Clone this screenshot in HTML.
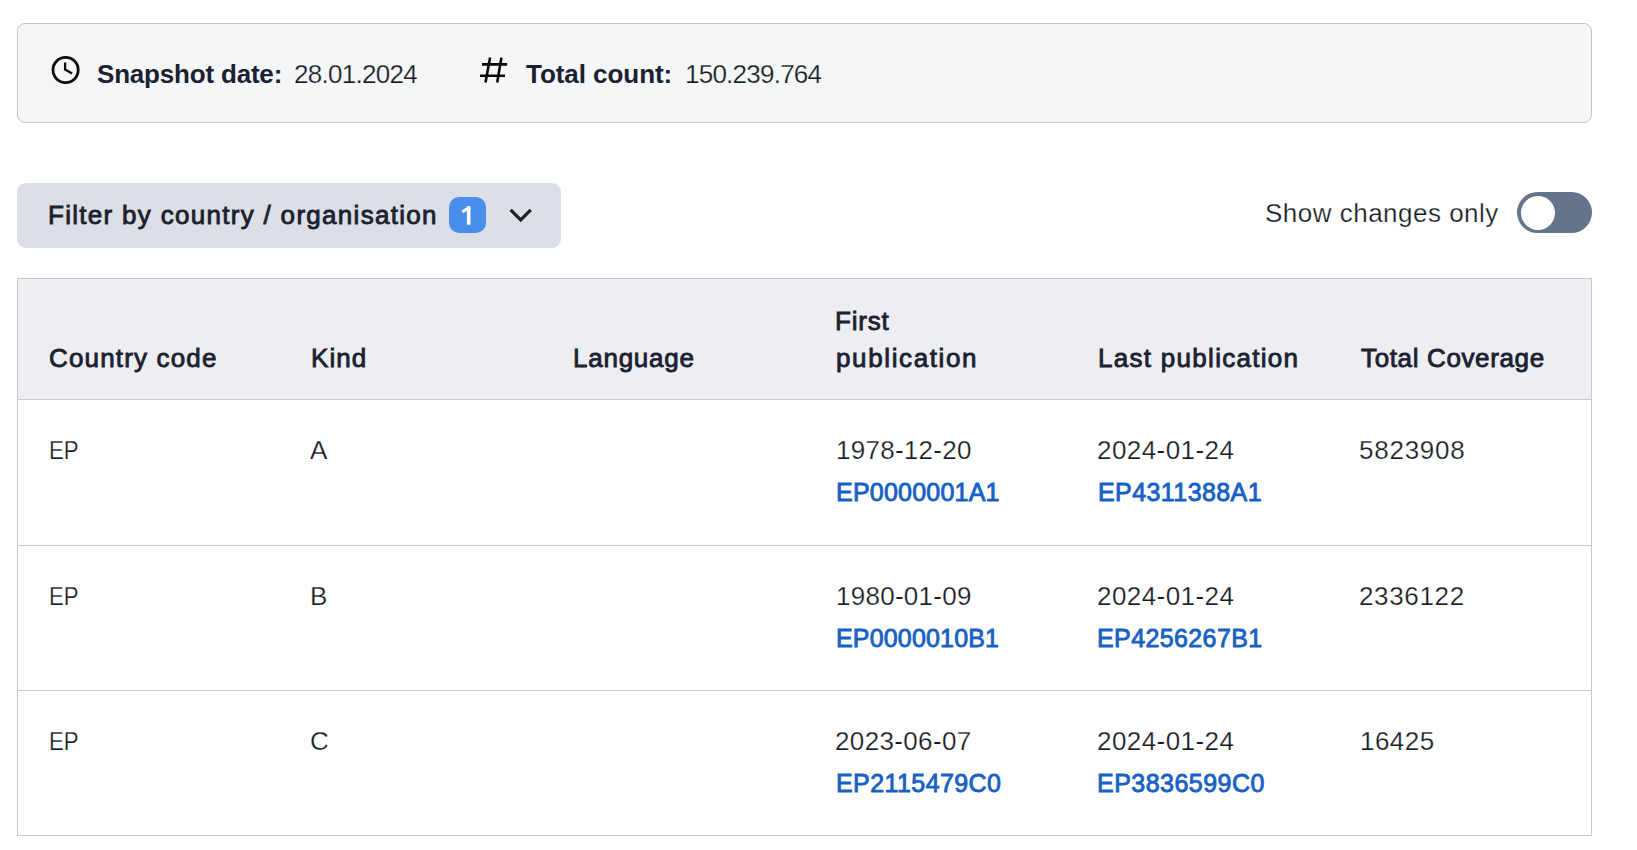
<!DOCTYPE html>
<html><head><meta charset="utf-8"><style>
html,body{margin:0;padding:0;background:#fff;}
body{width:1637px;height:850px;position:relative;overflow:hidden;font-family:"Liberation Sans",sans-serif;}
.t{position:absolute;white-space:nowrap;}
.ic{position:absolute;}
.panel{position:absolute;left:17px;top:23px;width:1573px;height:98px;border:1px solid #c4c5c7;border-radius:8px;background:#f5f6f8;}
.btn{position:absolute;left:17px;top:183px;width:544px;height:64.7px;border-radius:9px;background:#dcdfe5;}
.badge{position:absolute;left:449px;top:197px;width:37px;height:35.6px;border-radius:10px;background:#4a8eec;}
.tog{position:absolute;left:1517px;top:192px;width:75px;height:41px;border-radius:21px;background:#64748b;}
.knob{position:absolute;left:3.5px;top:3.5px;width:34.5px;height:34.5px;border-radius:50%;background:#fff;}
.table{position:absolute;left:17px;top:278px;width:1573px;height:556px;border:1px solid #c8c8c8;background:#fff;}
.thead{position:absolute;left:18px;top:279px;width:1573px;height:120px;background:#edeef2;}
.hl{position:absolute;left:18px;width:1573px;height:1px;background:#c8c8c8;}
</style></head>
<body>
<div class="panel"></div>
<svg class="ic" style="left:30px;top:40px" width="60" height="60" viewBox="0 0 60 60"><circle cx="35.6" cy="30" r="12.6" fill="none" stroke="#0a0a0a" stroke-width="2.8"/><path d="M35.1 22.6 V29.6 L42.1 33.6" fill="none" stroke="#0a0a0a" stroke-width="2.3"/></svg>
<svg class="ic" style="left:470px;top:45px" width="60" height="55" viewBox="0 0 60 55"><path d="M20.1 12.6 L15.5 37.5 M31.4 12.6 L27.2 37.5 M12 19.4 H37.2 M10 30.7 H35" fill="none" stroke="#0a0a0a" stroke-width="2.6"/></svg>
<div class="btn"></div>
<div class="badge"></div>
<svg class="ic" style="left:445px;top:193px" width="46" height="44" viewBox="0 0 46 44"><path d="M23.7 13.2 V31.8" stroke="#fff" stroke-width="3.6" fill="none"/><path d="M24.4 14.2 L17.3 18.9" stroke="#fff" stroke-width="3" fill="none"/></svg>
<svg class="ic" style="left:505px;top:203px" width="32" height="26" viewBox="0 0 32 26"><path d="M5.6 6.8 L15.7 16.9 L25.8 6.8" fill="none" stroke="#1d222c" stroke-width="3.3"/></svg>
<div class="tog"><div class="knob"></div></div>
<div class="table"></div>
<div class="thead"></div>
<div class="hl" style="top:399px"></div>
<div class="hl" style="top:545px"></div>
<div class="hl" style="top:690px"></div>
<div id="snap" class="t" style="left:97.00px;top:60.99px;font-size:26px;line-height:26px;font-weight:700;color:#1b2130;letter-spacing:-0.192px;transform:scaleX(1.0000);transform-origin:0 0">Snapshot date:</div>
<div id="date" class="t" style="left:294.00px;top:60.99px;font-size:26px;line-height:26px;font-weight:400;-webkit-text-stroke:0.25px #f5f6f8;color:#161a22;letter-spacing:-0.722px;transform:scaleX(1.0000);transform-origin:0 0">28.01.2024</div>
<div id="total" class="t" style="left:526.00px;top:60.99px;font-size:26px;line-height:26px;font-weight:700;color:#1b2130;letter-spacing:-0.055px;transform:scaleX(1.0000);transform-origin:0 0">Total count:</div>
<div id="count" class="t" style="left:685.00px;top:60.99px;font-size:26px;line-height:26px;font-weight:400;-webkit-text-stroke:0.25px #f5f6f8;color:#161a22;letter-spacing:-0.760px;transform:scaleX(1.0000);transform-origin:0 0">150.239.764</div>
<div id="filter" class="t" style="left:48.00px;top:202.29px;font-size:26px;line-height:26px;font-weight:400;-webkit-text-stroke:0.85px #1b2130;color:#1b2130;letter-spacing:1.300px;transform:scaleX(1.0000);transform-origin:0 0">Filter by country / organisation</div>
<div id="show" class="t" style="left:1265.00px;top:199.99px;font-size:26px;line-height:26px;font-weight:400;-webkit-text-stroke:0.25px #ffffff;color:#161a22;letter-spacing:0.488px;transform:scaleX(1.0000);transform-origin:0 0">Show changes only</div>
<div id="country" class="t" style="left:49.00px;top:344.99px;font-size:26px;line-height:26px;font-weight:400;-webkit-text-stroke:0.85px #1b2130;color:#1b2130;letter-spacing:1.164px;transform:scaleX(1.0000);transform-origin:0 0">Country code</div>
<div id="kind" class="t" style="left:311.00px;top:344.99px;font-size:26px;line-height:26px;font-weight:400;-webkit-text-stroke:0.85px #1b2130;color:#1b2130;letter-spacing:1.067px;transform:scaleX(1.0000);transform-origin:0 0">Kind</div>
<div id="lang" class="t" style="left:573.00px;top:344.99px;font-size:26px;line-height:26px;font-weight:400;-webkit-text-stroke:0.85px #1b2130;color:#1b2130;letter-spacing:0.757px;transform:scaleX(1.0000);transform-origin:0 0">Language</div>
<div id="first" class="t" style="left:835.00px;top:307.99px;font-size:26px;line-height:26px;font-weight:400;-webkit-text-stroke:0.85px #1b2130;color:#1b2130;letter-spacing:0.800px;transform:scaleX(1.0000);transform-origin:0 0">First</div>
<div id="publ" class="t" style="left:836.00px;top:344.99px;font-size:26px;line-height:26px;font-weight:400;-webkit-text-stroke:0.85px #1b2130;color:#1b2130;letter-spacing:1.620px;transform:scaleX(1.0000);transform-origin:0 0">publication</div>
<div id="last" class="t" style="left:1098.00px;top:344.99px;font-size:26px;line-height:26px;font-weight:400;-webkit-text-stroke:0.85px #1b2130;color:#1b2130;letter-spacing:1.293px;transform:scaleX(1.0000);transform-origin:0 0">Last publication</div>
<div id="tcov" class="t" style="left:1361.00px;top:344.99px;font-size:26px;line-height:26px;font-weight:400;-webkit-text-stroke:0.85px #1b2130;color:#1b2130;letter-spacing:0.638px;transform:scaleX(1.0000);transform-origin:0 0">Total Coverage</div>
<div id="r0c0" class="t" style="left:49.29px;top:436.99px;font-size:26px;line-height:26px;font-weight:400;-webkit-text-stroke:0.25px #ffffff;color:#161a22;letter-spacing:0.000px;transform:scaleX(0.8531);transform-origin:0 0">EP</div>
<div id="r0c1" class="t" style="left:310.00px;top:436.99px;font-size:26px;line-height:26px;font-weight:400;-webkit-text-stroke:0.25px #ffffff;color:#161a22;letter-spacing:0.000px;transform:scaleX(1.0000);transform-origin:0 0">A</div>
<div id="r0c2" class="t" style="left:836.00px;top:436.99px;font-size:26px;line-height:26px;font-weight:400;-webkit-text-stroke:0.25px #ffffff;color:#161a22;letter-spacing:0.267px;transform:scaleX(1.0000);transform-origin:0 0">1978-12-20</div>
<div id="r0c3" class="t" style="left:836.00px;top:480.34px;font-size:25px;line-height:25px;font-weight:400;-webkit-text-stroke:0.85px #1761c4;color:#1761c4;letter-spacing:0.220px;transform:scaleX(1.0000);transform-origin:0 0">EP0000001A1</div>
<div id="r0c4" class="t" style="left:1097.00px;top:436.99px;font-size:26px;line-height:26px;font-weight:400;-webkit-text-stroke:0.25px #ffffff;color:#161a22;letter-spacing:0.433px;transform:scaleX(1.0000);transform-origin:0 0">2024-01-24</div>
<div id="r0c5" class="t" style="left:1098.00px;top:480.34px;font-size:25px;line-height:25px;font-weight:400;-webkit-text-stroke:0.85px #1761c4;color:#1761c4;letter-spacing:0.420px;transform:scaleX(1.0000);transform-origin:0 0">EP4311388A1</div>
<div id="r0c6" class="t" style="left:1359.00px;top:436.99px;font-size:26px;line-height:26px;font-weight:400;-webkit-text-stroke:0.25px #ffffff;color:#161a22;letter-spacing:0.750px;transform:scaleX(1.0000);transform-origin:0 0">5823908</div>
<div id="r1c0" class="t" style="left:49.29px;top:582.99px;font-size:26px;line-height:26px;font-weight:400;-webkit-text-stroke:0.25px #ffffff;color:#161a22;letter-spacing:0.000px;transform:scaleX(0.8531);transform-origin:0 0">EP</div>
<div id="r1c1" class="t" style="left:310.00px;top:582.99px;font-size:26px;line-height:26px;font-weight:400;-webkit-text-stroke:0.25px #ffffff;color:#161a22;letter-spacing:0.000px;transform:scaleX(1.0000);transform-origin:0 0">B</div>
<div id="r1c2" class="t" style="left:836.00px;top:582.99px;font-size:26px;line-height:26px;font-weight:400;-webkit-text-stroke:0.25px #ffffff;color:#161a22;letter-spacing:0.267px;transform:scaleX(1.0000);transform-origin:0 0">1980-01-09</div>
<div id="r1c3" class="t" style="left:836.00px;top:626.34px;font-size:25px;line-height:25px;font-weight:400;-webkit-text-stroke:0.85px #1761c4;color:#1761c4;letter-spacing:0.170px;transform:scaleX(1.0000);transform-origin:0 0">EP0000010B1</div>
<div id="r1c4" class="t" style="left:1097.00px;top:582.99px;font-size:26px;line-height:26px;font-weight:400;-webkit-text-stroke:0.25px #ffffff;color:#161a22;letter-spacing:0.433px;transform:scaleX(1.0000);transform-origin:0 0">2024-01-24</div>
<div id="r1c5" class="t" style="left:1097.00px;top:626.34px;font-size:25px;line-height:25px;font-weight:400;-webkit-text-stroke:0.85px #1761c4;color:#1761c4;letter-spacing:0.390px;transform:scaleX(1.0000);transform-origin:0 0">EP4256267B1</div>
<div id="r1c6" class="t" style="left:1359.00px;top:582.99px;font-size:26px;line-height:26px;font-weight:400;-webkit-text-stroke:0.25px #ffffff;color:#161a22;letter-spacing:0.650px;transform:scaleX(1.0000);transform-origin:0 0">2336122</div>
<div id="r2c0" class="t" style="left:49.29px;top:727.99px;font-size:26px;line-height:26px;font-weight:400;-webkit-text-stroke:0.25px #ffffff;color:#161a22;letter-spacing:0.000px;transform:scaleX(0.8531);transform-origin:0 0">EP</div>
<div id="r2c1" class="t" style="left:310.00px;top:727.99px;font-size:26px;line-height:26px;font-weight:400;-webkit-text-stroke:0.25px #ffffff;color:#161a22;letter-spacing:0.000px;transform:scaleX(1.0000);transform-origin:0 0">C</div>
<div id="r2c2" class="t" style="left:835.00px;top:727.99px;font-size:26px;line-height:26px;font-weight:400;-webkit-text-stroke:0.25px #ffffff;color:#161a22;letter-spacing:0.356px;transform:scaleX(1.0000);transform-origin:0 0">2023-06-07</div>
<div id="r2c3" class="t" style="left:836.00px;top:771.34px;font-size:25px;line-height:25px;font-weight:400;-webkit-text-stroke:0.85px #1761c4;color:#1761c4;letter-spacing:0.420px;transform:scaleX(1.0000);transform-origin:0 0">EP2115479C0</div>
<div id="r2c4" class="t" style="left:1097.00px;top:727.99px;font-size:26px;line-height:26px;font-weight:400;-webkit-text-stroke:0.25px #ffffff;color:#161a22;letter-spacing:0.433px;transform:scaleX(1.0000);transform-origin:0 0">2024-01-24</div>
<div id="r2c5" class="t" style="left:1097.00px;top:771.34px;font-size:25px;line-height:25px;font-weight:400;-webkit-text-stroke:0.85px #1761c4;color:#1761c4;letter-spacing:0.480px;transform:scaleX(1.0000);transform-origin:0 0">EP3836599C0</div>
<div id="r2c6" class="t" style="left:1360.00px;top:727.99px;font-size:26px;line-height:26px;font-weight:400;-webkit-text-stroke:0.25px #ffffff;color:#161a22;letter-spacing:0.475px;transform:scaleX(1.0000);transform-origin:0 0">16425</div>
</body></html>
